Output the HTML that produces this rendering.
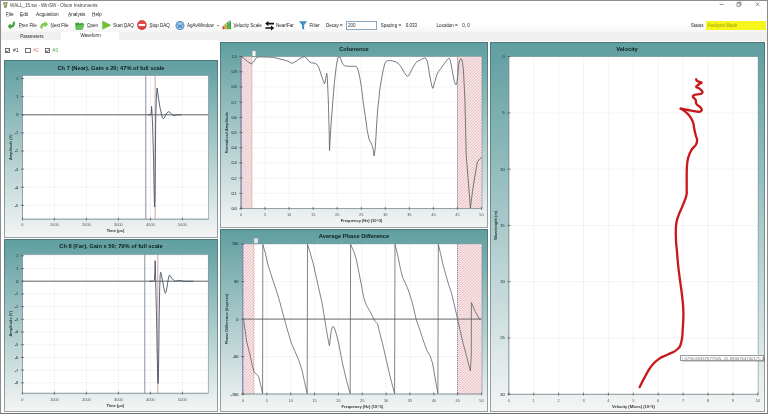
<!DOCTYPE html>
<html><head><meta charset="utf-8"><title>WinSW - Olson Instruments</title>
<style>
html,body{margin:0;padding:0;}
body{width:768px;height:414px;overflow:hidden;background:#fff;position:relative;font-family:"Liberation Sans",sans-serif;color:#222;}
.a{position:absolute;}
.t{position:absolute;white-space:nowrap;line-height:1.16;}
.panel{position:absolute;background:linear-gradient(#5f9ea0,#f5f5f5);box-sizing:border-box;background-origin:border-box;border:0.7px solid rgba(60,80,82,0.5);}
.plot{position:absolute;background:#fff;}
svg{position:absolute;left:0;top:0;overflow:visible;}
svg text{font-family:"Liberation Sans",sans-serif;}
u{text-decoration:none;background:linear-gradient(#777,#777) 0 92%/100% 0.4px no-repeat;}
#root{position:absolute;left:0;top:0;width:768px;height:414px;filter:blur(0.28px);}
</style></head><body><div id="root">
<div class="a" style="left:0px;top:0px;width:768px;height:414px;background:#fff;"></div>
<div class="a" style="left:1px;top:18px;width:766px;height:14.4px;background:linear-gradient(#ffffff 45%,#f5f5f5);"></div>
<div class="a" style="left:1px;top:32.2px;width:766px;height:9.2px;background:#f0f0f0;"></div>
<div class="a" style="left:218px;top:41.2px;width:549px;height:372px;background:#fdfdfd;"></div>
<div class="a" style="left:2px;top:40.3px;width:216px;height:372px;background:#fff;"></div>
<div class="a" style="left:60.7px;top:31.7px;width:58.8px;height:9.6px;background:#fff;"></div>
<svg width="768" height="414" viewBox="0 0 768 414"><g><path d="M3.2 2.6 L7.6 2.2 L6.6 7.4 L4.4 7.8 Z" fill="#6b6b3a"/><path d="M4 3.4 L6.8 3.1 L6.1 6.4 L4.7 6.7Z" fill="#c9c48a"/></g></svg>
<div class="t" style="left:10px;top:2.93px;font-size:4.6px;color:#444;">WALL_15.sw - WinSW - Olson Instruments</div>
<svg width="768" height="414" viewBox="0 0 768 414" fill="none" stroke="#444" stroke-width="0.55"><path d="M719.5 4.5H723.5"/><rect x="737" y="3" width="3" height="3.2"/><path d="M738 3V2.1H741V5.2H740"/><path d="M755.8 2.4L759.4 6M759.4 2.4L755.8 6"/></svg>
<div class="t" style="left:6px;top:11.67px;font-size:4.7px;color:#222;"><u>F</u>ile</div>
<div class="t" style="left:20px;top:11.67px;font-size:4.7px;color:#222;"><u>E</u>dit</div>
<div class="t" style="left:36px;top:11.67px;font-size:4.7px;color:#222;">Ac<u>q</u>uisition</div>
<div class="t" style="left:68px;top:11.67px;font-size:4.7px;color:#222;"><u>A</u>nalysis</div>
<div class="t" style="left:92px;top:11.67px;font-size:4.7px;color:#222;"><u>H</u>elp</div>
<div class="t" style="left:18.75px;top:22.76px;font-size:4.55px;color:#222;"><u>P</u>rev File</div>
<div class="t" style="left:50.6px;top:22.76px;font-size:4.55px;color:#222;"><u>N</u>ext File</div>
<div class="t" style="left:86.9px;top:22.76px;font-size:4.55px;color:#222;"><u>O</u>pen</div>
<div class="t" style="left:113.1px;top:22.76px;font-size:4.55px;color:#222;">Start <u>D</u>AQ</div>
<div class="t" style="left:149.4px;top:22.76px;font-size:4.55px;color:#222;"><u>S</u>top DAQ</div>
<div class="t" style="left:186.9px;top:22.76px;font-size:4.55px;color:#222;">AgAvWindow</div>
<div class="t" style="left:233.4px;top:22.76px;font-size:4.55px;color:#222;"><u>V</u>elocity Scale</div>
<div class="t" style="left:275.9px;top:22.76px;font-size:4.55px;color:#222;">Near/Far</div>
<div class="t" style="left:309.6px;top:22.76px;font-size:4.55px;color:#222;">Filter</div>
<div class="t" style="left:325.9px;top:22.76px;font-size:4.55px;color:#222;">Decay =</div>
<div class="t" style="left:380.75px;top:22.76px;font-size:4.55px;color:#222;">Spacing =</div>
<div class="t" style="left:405.75px;top:22.76px;font-size:4.55px;color:#222;">0.033</div>
<div class="t" style="left:436.6px;top:22.76px;font-size:4.55px;color:#222;">Location =</div>
<div class="t" style="left:462.25px;top:22.76px;font-size:4.55px;color:#222;">0, 0</div>
<div class="t" style="left:690.75px;top:22.96px;font-size:4.55px;color:#222;">Status</div>
<div class="a" style="left:706.4px;top:21.25px;width:59.4px;height:8.5px;background:#f6f61c;"></div>
<div class="t" style="left:707.8px;top:22.96px;font-size:4.55px;color:#9a9a10;">Analysis Mode</div>
<div class="a" style="left:345.5px;top:21px;width:31px;height:8.75px;background:#fff;box-sizing:border-box;border:0.6px solid #8aa6c2;"></div>
<div class="t" style="left:348px;top:22.76px;font-size:4.55px;color:#333;">200</div>
<svg width="768" height="414" viewBox="0 0 768 414">
<!-- prev arrow -->
<path d="M14.6 21.8 C15.4 25.6 13.6 27.6 10.6 27.6 L10.6 29 L7.9 26.4 L10.6 23.8 L10.6 25.4 C12.4 25.4 13.2 24.4 13 22 Z" fill="#3aa33a" stroke="#2c8a2c" stroke-width="0.3"/>
<!-- next arrow -->
<path d="M40.6 28.2 C40.2 24.6 42 23 44.8 23 L44.8 21.5 L48.2 24.3 L44.8 27.1 L44.8 25.5 C43 25.5 42.2 26.4 42.4 28.4 Z" fill="#86cc4e" stroke="#6ab83a" stroke-width="0.3"/>
<!-- open folder -->
<path d="M75.2 23 L78.4 22.4 L79.4 23.4 L83 22.8 L83.6 24.4 L84.4 24.4 L82.4 29.4 L75.8 29.8 Z" fill="#3da23d"/>
<path d="M76.6 25.4 L84.4 24.6 L82.4 29.4 L75.8 29.8 Z" fill="#62c45a"/>
<!-- play -->
<path d="M102.6 21 L110.8 25.2 L102.6 29.2 Z" fill="#6cc232" stroke="#58aa28" stroke-width="0.4" stroke-linejoin="round"/>
<!-- stop -->
<circle cx="141.9" cy="25.1" r="4.8" fill="#cf2d2d"/>
<circle cx="141.9" cy="24.4" r="3.9" fill="#e04a44"/>
<rect x="138.6" y="24" width="6.6" height="2.1" rx="0.5" fill="#fff"/>
<!-- globe -->
<circle cx="180" cy="25.6" r="4.5" fill="#4f8fc9"/>
<circle cx="180" cy="25.6" r="3.4" fill="#a9cdea"/>
<path d="M177.6 23.6 L178.8 27.8 L180 24.8 L181.2 27.8 L182.4 23.6" fill="none" stroke="#3a78b4" stroke-width="0.8"/>
<!-- dropdown -->
<path d="M217 25 L219 25 L218 26.2 Z" fill="#444"/>
<!-- velocity scale -->
<rect x="222.6" y="26.4" width="2" height="2.8" fill="#c23a2a"/>
<rect x="224.8" y="24.6" width="2" height="4.6" fill="#d8a020"/>
<rect x="227" y="22.6" width="2" height="6.6" fill="#4db23a"/>
<rect x="229.2" y="21.4" width="1.8" height="7.8" fill="#3da23d"/>
<path d="M223.4 26 L230.6 20" stroke="#4a7a3a" stroke-width="0.6"/>
<!-- near/far arrows -->
<path d="M274 22.8 H268.4 V21 L265.2 23.6 L268.4 26.2 V24.4 H274 Z" fill="#111"/>
<path d="M265.4 27.2 H271 V25.4 L274.2 28 L271 30.6 V28.8 H265.4 Z" fill="#111"/>
<!-- funnel -->
<path d="M299 21.2 H307.2 L304.1 25 V29.8 L302.1 28.6 V25 Z" fill="#3a8fcb"/>
</svg>
<div class="t" style="left:20.3px;top:34.19px;font-size:4.5px;color:#222;">Parameters</div>
<div class="t" style="left:80.5px;top:33.39px;font-size:4.5px;color:#222;">Waveform</div>
<div class="a" style="left:4.8px;top:48.2px;width:5.3px;height:5.3px;box-sizing:border-box;border:0.5px solid #707070;background:#fff"></div>
<svg width="768" height="414" viewBox="0 0 768 414"><path d="M6.0 50.9 L7.0 52.1 L9.0 49.5" fill="none" stroke="#444" stroke-width="0.7"/></svg>
<div class="t" style="left:13px;top:48.00px;font-size:5px;color:#333;">#1</div>
<div class="a" style="left:25.3px;top:48.2px;width:5.3px;height:5.3px;box-sizing:border-box;border:0.5px solid #707070;background:#fff"></div>
<div class="t" style="left:33.2px;top:48.00px;font-size:5px;color:#e08888;">#2</div>
<div class="a" style="left:44.7px;top:48.2px;width:5.3px;height:5.3px;box-sizing:border-box;border:0.5px solid #707070;background:#fff"></div>
<svg width="768" height="414" viewBox="0 0 768 414"><path d="M45.900000000000006 50.9 L46.900000000000006 52.1 L48.900000000000006 49.5" fill="none" stroke="#444" stroke-width="0.7"/></svg>
<div class="t" style="left:52.4px;top:48.00px;font-size:5px;color:#6aa56a;">#3</div>
<div class="panel" style="left:4px;top:60px;width:213.60px;height:177.50px;"></div>
<svg width="768" height="414" viewBox="0 0 768 414"><rect x="22.5" y="75.4" width="186.00" height="143.70" fill="#fff"/><path d="M54.40 75.4V219.1 M86.40 75.4V219.1 M118.40 75.4V219.1 M150.40 75.4V219.1 M182.40 75.4V219.1 M22.5 78.60H208.5 M22.5 96.70H208.5 M22.5 114.80H208.5 M22.5 132.90H208.5 M22.5 151.00H208.5 M22.5 169.10H208.5 M22.5 187.20H208.5 M22.5 205.30H208.5" stroke="#dadada" stroke-width="0.6" stroke-dasharray="0.8 0.8" fill="none"/><path d="M22.5 114.8H208.5" stroke="#5a5e62" stroke-width="0.95"/><path d="M145.8 75.4V219.1" stroke="#7f8498" stroke-width="0.9"/><path d="M155.1 75.4V219.1" stroke="#c58a94" stroke-width="0.8"/><path d="M148.0 114.8 L150.9 114.8 L151.2 113.0 L151.6 106.4 L151.9 111.0 L152.6 125.0 L153.6 160.0 L154.2 195.0 L154.6 207.0 L155.0 195.0 L155.4 150.0 L155.8 115.0 L156.4 97.0 L157.1 88.0 L157.8 93.0 L158.8 100.0 L160.0 107.5 L161.4 114.0 L162.4 117.8 L163.2 118.8 L164.2 118.0 L165.6 115.2 L167.2 112.6 L168.6 111.7 L170.0 112.4 L171.6 114.0 L173.0 115.3 L174.4 115.6 L176.0 115.1 L178.0 114.7 L181.0 114.8" fill="none" stroke="#465262" stroke-width="0.88" stroke-linejoin="round" stroke-linecap="round" /><rect x="22.5" y="75.4" width="186.00" height="143.70" fill="none" stroke="#5d7f82" stroke-width="0.5"/><path d="M22.5 75.4V219.1H208.5" fill="none" stroke="#868e90" stroke-width="0.55"/><path d="M22.40 217.5V220.5 M54.40 217.5V220.5 M86.40 217.5V220.5 M118.40 217.5V220.5 M150.40 217.5V220.5 M182.40 217.5V220.5 M20.9 78.60H24.1 M20.9 96.70H24.1 M20.9 114.80H24.1 M20.9 132.90H24.1 M20.9 151.00H24.1 M20.9 169.10H24.1 M20.9 187.20H24.1 M20.9 205.30H24.1" stroke="#4a5052" stroke-width="0.7" fill="none"/><text x="22.40" y="226.00" font-size="3.9" fill="#555" text-anchor="middle">0</text><text x="54.40" y="226.00" font-size="3.9" fill="#555" text-anchor="middle">1000</text><text x="86.40" y="226.00" font-size="3.9" fill="#555" text-anchor="middle">2000</text><text x="118.40" y="226.00" font-size="3.9" fill="#555" text-anchor="middle">3000</text><text x="150.40" y="226.00" font-size="3.9" fill="#555" text-anchor="middle">4000</text><text x="182.40" y="226.00" font-size="3.9" fill="#555" text-anchor="middle">5000</text><text x="18.30" y="80.00" font-size="3.9" fill="#2c4a4c" stroke="#2c4a4c" stroke-width="0.08" text-anchor="end">2</text><text x="18.30" y="98.10" font-size="3.9" fill="#2c4a4c" stroke="#2c4a4c" stroke-width="0.08" text-anchor="end">1</text><text x="18.30" y="116.20" font-size="3.9" fill="#2c4a4c" stroke="#2c4a4c" stroke-width="0.08" text-anchor="end">0</text><text x="18.30" y="134.30" font-size="3.9" fill="#2c4a4c" stroke="#2c4a4c" stroke-width="0.08" text-anchor="end">-1</text><text x="18.30" y="152.40" font-size="3.9" fill="#2c4a4c" stroke="#2c4a4c" stroke-width="0.08" text-anchor="end">-2</text><text x="18.30" y="170.50" font-size="3.9" fill="#2c4a4c" stroke="#2c4a4c" stroke-width="0.08" text-anchor="end">-3</text><text x="18.30" y="188.60" font-size="3.9" fill="#2c4a4c" stroke="#2c4a4c" stroke-width="0.08" text-anchor="end">-4</text><text x="18.30" y="206.70" font-size="3.9" fill="#2c4a4c" stroke="#2c4a4c" stroke-width="0.08" text-anchor="end">-5</text><text x="111" y="69.55" font-size="5.72" font-weight="bold" fill="#0c1c1e" text-anchor="middle">Ch 7 (Near), Gain x 20; 47% of full scale</text><text x="115.50" y="232.10" font-size="4" font-weight="bold" fill="#333" text-anchor="middle">Time (μs)</text><text transform="translate(11.60 147.25) rotate(-90)" font-size="3.95" font-weight="bold" fill="#2a3a3c" text-anchor="middle">Amplitude (V)</text></svg>
<div class="panel" style="left:4px;top:239.1px;width:213.60px;height:173.10px;"></div>
<svg width="768" height="414" viewBox="0 0 768 414"><rect x="22.5" y="254.4" width="185.70" height="138.80" fill="#fff"/><path d="M54.40 254.4V393.2 M86.40 254.4V393.2 M118.40 254.4V393.2 M150.40 254.4V393.2 M182.40 254.4V393.2 M22.5 255.80H208.2 M22.5 268.50H208.2 M22.5 281.20H208.2 M22.5 293.90H208.2 M22.5 306.60H208.2 M22.5 319.30H208.2 M22.5 332.00H208.2 M22.5 344.70H208.2 M22.5 357.40H208.2 M22.5 370.10H208.2 M22.5 382.80H208.2" stroke="#dadada" stroke-width="0.6" stroke-dasharray="0.8 0.8" fill="none"/><path d="M22.5 281.2H208.2" stroke="#5a5e62" stroke-width="0.95"/><path d="M144.8 254.4V393.2" stroke="#7f8498" stroke-width="0.9"/><path d="M157.8 254.4V393.2" stroke="#c58a94" stroke-width="0.8"/><path d="M150.0 281.2 L153.6 281.2 L154.4 280.4 L154.8 272.0 L155.1 260.7 L155.4 268.0 L155.9 290.0 L156.6 320.0 L157.2 355.0 L157.8 380.0 L158.1 383.5 L158.4 378.0 L158.8 350.0 L159.2 315.0 L159.7 288.0 L160.2 274.5 L160.7 272.3 L161.4 274.5 L162.4 280.0 L163.6 287.0 L164.6 291.6 L165.4 293.2 L166.2 291.5 L167.2 286.0 L168.2 279.5 L169.3 275.2 L170.4 276.0 L172.0 278.4 L174.0 280.5 L175.8 281.3 L178.5 280.3 L181.0 280.8 L185.0 281.3 L193.0 281.2" fill="none" stroke="#465262" stroke-width="0.88" stroke-linejoin="round" stroke-linecap="round" /><rect x="22.5" y="254.4" width="185.70" height="138.80" fill="none" stroke="#5d7f82" stroke-width="0.5"/><path d="M22.5 254.4V393.2H208.2" fill="none" stroke="#868e90" stroke-width="0.55"/><path d="M22.40 391.59999999999997V394.59999999999997 M54.40 391.59999999999997V394.59999999999997 M86.40 391.59999999999997V394.59999999999997 M118.40 391.59999999999997V394.59999999999997 M150.40 391.59999999999997V394.59999999999997 M182.40 391.59999999999997V394.59999999999997 M20.9 255.80H24.1 M20.9 268.50H24.1 M20.9 281.20H24.1 M20.9 293.90H24.1 M20.9 306.60H24.1 M20.9 319.30H24.1 M20.9 332.00H24.1 M20.9 344.70H24.1 M20.9 357.40H24.1 M20.9 370.10H24.1 M20.9 382.80H24.1" stroke="#4a5052" stroke-width="0.7" fill="none"/><text x="22.40" y="400.60" font-size="3.9" fill="#555" text-anchor="middle">0</text><text x="54.40" y="400.60" font-size="3.9" fill="#555" text-anchor="middle">1000</text><text x="86.40" y="400.60" font-size="3.9" fill="#555" text-anchor="middle">2000</text><text x="118.40" y="400.60" font-size="3.9" fill="#555" text-anchor="middle">3000</text><text x="150.40" y="400.60" font-size="3.9" fill="#555" text-anchor="middle">4000</text><text x="182.40" y="400.60" font-size="3.9" fill="#555" text-anchor="middle">5000</text><text x="18.30" y="257.20" font-size="3.9" fill="#2c4a4c" stroke="#2c4a4c" stroke-width="0.08" text-anchor="end">2</text><text x="18.30" y="269.90" font-size="3.9" fill="#2c4a4c" stroke="#2c4a4c" stroke-width="0.08" text-anchor="end">1</text><text x="18.30" y="282.60" font-size="3.9" fill="#2c4a4c" stroke="#2c4a4c" stroke-width="0.08" text-anchor="end">0</text><text x="18.30" y="295.30" font-size="3.9" fill="#2c4a4c" stroke="#2c4a4c" stroke-width="0.08" text-anchor="end">-1</text><text x="18.30" y="308.00" font-size="3.9" fill="#2c4a4c" stroke="#2c4a4c" stroke-width="0.08" text-anchor="end">-2</text><text x="18.30" y="320.70" font-size="3.9" fill="#2c4a4c" stroke="#2c4a4c" stroke-width="0.08" text-anchor="end">-3</text><text x="18.30" y="333.40" font-size="3.9" fill="#2c4a4c" stroke="#2c4a4c" stroke-width="0.08" text-anchor="end">-4</text><text x="18.30" y="346.10" font-size="3.9" fill="#2c4a4c" stroke="#2c4a4c" stroke-width="0.08" text-anchor="end">-5</text><text x="18.30" y="358.80" font-size="3.9" fill="#2c4a4c" stroke="#2c4a4c" stroke-width="0.08" text-anchor="end">-6</text><text x="18.30" y="371.50" font-size="3.9" fill="#2c4a4c" stroke="#2c4a4c" stroke-width="0.08" text-anchor="end">-7</text><text x="18.30" y="384.20" font-size="3.9" fill="#2c4a4c" stroke="#2c4a4c" stroke-width="0.08" text-anchor="end">-8</text><text x="111" y="248.35" font-size="5.72" font-weight="bold" fill="#0c1c1e" text-anchor="middle">Ch 8 (Far), Gain x 50; 79% of full scale</text><text x="115.35" y="406.70" font-size="4" font-weight="bold" fill="#333" text-anchor="middle">Time (μs)</text><text transform="translate(11.60 323.80) rotate(-90)" font-size="3.95" font-weight="bold" fill="#2a3a3c" text-anchor="middle">Amplitude (V)</text></svg>
<div class="panel" style="left:220.2px;top:42.3px;width:267.60px;height:185.30px;"></div>
<svg width="768" height="414" viewBox="0 0 768 414"><rect x="241" y="56.5" width="241.00" height="152.00" fill="#fff"/><path d="M265.05 56.5V208.5 M289.10 56.5V208.5 M313.15 56.5V208.5 M337.20 56.5V208.5 M361.25 56.5V208.5 M385.30 56.5V208.5 M409.35 56.5V208.5 M433.40 56.5V208.5 M457.45 56.5V208.5 M241 71.70H482 M241 86.90H482 M241 102.10H482 M241 117.30H482 M241 132.50H482 M241 147.70H482 M241 162.90H482 M241 178.10H482 M241 193.30H482" stroke="#dadada" stroke-width="0.6" stroke-dasharray="0.8 0.8" fill="none"/><clipPath id="hc1"><rect x="241" y="56.5" width="10.90" height="152.00"/></clipPath><rect x="241" y="56.5" width="10.90" height="152.00" fill="#f9e7e7"/><path clip-path="url(#hc1)" d="M89.00 208.50l152.00 -152.00 M92.00 208.50l152.00 -152.00 M95.00 208.50l152.00 -152.00 M98.00 208.50l152.00 -152.00 M101.00 208.50l152.00 -152.00 M104.00 208.50l152.00 -152.00 M107.00 208.50l152.00 -152.00 M110.00 208.50l152.00 -152.00 M113.00 208.50l152.00 -152.00 M116.00 208.50l152.00 -152.00 M119.00 208.50l152.00 -152.00 M122.00 208.50l152.00 -152.00 M125.00 208.50l152.00 -152.00 M128.00 208.50l152.00 -152.00 M131.00 208.50l152.00 -152.00 M134.00 208.50l152.00 -152.00 M137.00 208.50l152.00 -152.00 M140.00 208.50l152.00 -152.00 M143.00 208.50l152.00 -152.00 M146.00 208.50l152.00 -152.00 M149.00 208.50l152.00 -152.00 M152.00 208.50l152.00 -152.00 M155.00 208.50l152.00 -152.00 M158.00 208.50l152.00 -152.00 M161.00 208.50l152.00 -152.00 M164.00 208.50l152.00 -152.00 M167.00 208.50l152.00 -152.00 M170.00 208.50l152.00 -152.00 M173.00 208.50l152.00 -152.00 M176.00 208.50l152.00 -152.00 M179.00 208.50l152.00 -152.00 M182.00 208.50l152.00 -152.00 M185.00 208.50l152.00 -152.00 M188.00 208.50l152.00 -152.00 M191.00 208.50l152.00 -152.00 M194.00 208.50l152.00 -152.00 M197.00 208.50l152.00 -152.00 M200.00 208.50l152.00 -152.00 M203.00 208.50l152.00 -152.00 M206.00 208.50l152.00 -152.00 M209.00 208.50l152.00 -152.00 M212.00 208.50l152.00 -152.00 M215.00 208.50l152.00 -152.00 M218.00 208.50l152.00 -152.00 M221.00 208.50l152.00 -152.00 M224.00 208.50l152.00 -152.00 M227.00 208.50l152.00 -152.00 M230.00 208.50l152.00 -152.00 M233.00 208.50l152.00 -152.00 M236.00 208.50l152.00 -152.00 M239.00 208.50l152.00 -152.00 M242.00 208.50l152.00 -152.00 M245.00 208.50l152.00 -152.00 M248.00 208.50l152.00 -152.00 M251.00 208.50l152.00 -152.00" stroke="#e3b8bc" stroke-width="0.92" fill="none"/><clipPath id="hc2"><rect x="457.4" y="56.5" width="24.60" height="152.00"/></clipPath><rect x="457.4" y="56.5" width="24.60" height="152.00" fill="#f9e7e7"/><path clip-path="url(#hc2)" d="M305.40 208.50l152.00 -152.00 M308.40 208.50l152.00 -152.00 M311.40 208.50l152.00 -152.00 M314.40 208.50l152.00 -152.00 M317.40 208.50l152.00 -152.00 M320.40 208.50l152.00 -152.00 M323.40 208.50l152.00 -152.00 M326.40 208.50l152.00 -152.00 M329.40 208.50l152.00 -152.00 M332.40 208.50l152.00 -152.00 M335.40 208.50l152.00 -152.00 M338.40 208.50l152.00 -152.00 M341.40 208.50l152.00 -152.00 M344.40 208.50l152.00 -152.00 M347.40 208.50l152.00 -152.00 M350.40 208.50l152.00 -152.00 M353.40 208.50l152.00 -152.00 M356.40 208.50l152.00 -152.00 M359.40 208.50l152.00 -152.00 M362.40 208.50l152.00 -152.00 M365.40 208.50l152.00 -152.00 M368.40 208.50l152.00 -152.00 M371.40 208.50l152.00 -152.00 M374.40 208.50l152.00 -152.00 M377.40 208.50l152.00 -152.00 M380.40 208.50l152.00 -152.00 M383.40 208.50l152.00 -152.00 M386.40 208.50l152.00 -152.00 M389.40 208.50l152.00 -152.00 M392.40 208.50l152.00 -152.00 M395.40 208.50l152.00 -152.00 M398.40 208.50l152.00 -152.00 M401.40 208.50l152.00 -152.00 M404.40 208.50l152.00 -152.00 M407.40 208.50l152.00 -152.00 M410.40 208.50l152.00 -152.00 M413.40 208.50l152.00 -152.00 M416.40 208.50l152.00 -152.00 M419.40 208.50l152.00 -152.00 M422.40 208.50l152.00 -152.00 M425.40 208.50l152.00 -152.00 M428.40 208.50l152.00 -152.00 M431.40 208.50l152.00 -152.00 M434.40 208.50l152.00 -152.00 M437.40 208.50l152.00 -152.00 M440.40 208.50l152.00 -152.00 M443.40 208.50l152.00 -152.00 M446.40 208.50l152.00 -152.00 M449.40 208.50l152.00 -152.00 M452.40 208.50l152.00 -152.00 M455.40 208.50l152.00 -152.00 M458.40 208.50l152.00 -152.00 M461.40 208.50l152.00 -152.00 M464.40 208.50l152.00 -152.00 M467.40 208.50l152.00 -152.00 M470.40 208.50l152.00 -152.00 M473.40 208.50l152.00 -152.00 M476.40 208.50l152.00 -152.00 M479.40 208.50l152.00 -152.00" stroke="#e3b8bc" stroke-width="0.92" fill="none"/><path d="M251.9 56.5V208.5" stroke="#d99" stroke-width="0.6"/><path d="M457.5 56.5V208.5" stroke="#77709a" stroke-width="0.8" stroke-dasharray="1.2 0.8"/><path d="M241.7 56.9 L244.0 58.4 L247.3 61.3 L250.0 63.2 L251.7 63.8 L253.2 62.4 L254.8 60.0 L256.7 57.2 L260.0 56.9 L266.0 57.0 L272.4 57.3 L276.0 58.0 L280.0 59.0 L284.0 60.0 L287.5 61.0 L290.0 62.4 L291.9 63.2 L293.4 62.8 L295.0 62.0 L297.5 60.2 L300.0 58.5 L302.5 57.2 L304.5 56.7 L306.0 57.6 L308.9 61.3 L311.4 62.9 L313.5 63.0 L315.1 63.2 L316.8 64.4 L318.5 66.8 L320.0 71.0 L321.6 76.0 L323.2 80.6 L324.5 83.9 L325.4 81.0 L326.2 75.5 L326.7 73.2 L327.2 76.0 L327.7 86.0 L328.3 100.0 L329.0 125.0 L329.5 150.5 L330.1 140.0 L331.0 125.0 L332.0 112.0 L333.0 99.0 L334.5 81.4 L336.4 65.1 L337.9 57.8 L339.0 57.0 L340.2 57.3 L341.0 59.5 L342.0 62.6 L343.2 64.6 L344.5 65.7 L347.0 66.2 L350.2 66.3 L353.0 66.2 L355.9 66.4 L357.0 67.4 L357.9 69.4 L359.6 76.4 L361.5 87.7 L363.2 102.0 L365.3 116.3 L367.2 130.2 L369.0 139.0 L370.4 142.0 L371.6 144.0 L372.6 147.0 L373.4 150.3 L374.1 156.0 L374.7 152.0 L375.3 147.7 L376.0 136.0 L376.6 125.1 L377.8 107.5 L378.8 100.0 L379.7 90.2 L382.2 75.1 L383.6 68.4 L384.7 63.8 L386.0 61.6 L387.3 60.7 L390.0 60.6 L392.9 61.0 L395.5 61.8 L397.9 63.2 L400.2 65.6 L402.4 69.0 L404.4 72.6 L406.0 75.2 L407.8 76.4 L409.0 75.0 L410.3 72.6 L412.8 67.6 L416.0 62.6 L418.0 61.0 L420.4 60.0 L422.8 58.6 L424.8 57.8 L426.0 58.6 L427.3 61.3 L428.2 66.0 L429.2 72.6 L431.1 82.7 L432.0 86.4 L432.7 88.3 L433.4 87.0 L434.2 83.9 L436.7 75.1 L438.6 71.4 L440.5 68.8 L444.2 63.8 L447.4 59.4 L448.9 58.2 L449.8 59.0 L450.5 61.3 L451.4 66.0 L452.4 71.4 L454.3 81.4 L455.6 84.5 L456.4 84.4 L456.9 83.0 L457.8 75.1 L458.7 65.1 L459.4 61.0 L460.0 59.4 L461.2 58.8 L461.9 60.0 L462.5 62.6 L463.2 68.0 L463.7 75.1 L465.0 102.0 L466.2 155.0 L468.1 178.8 L469.4 195.0 L470.4 208.0 L471.4 200.0 L472.5 191.4 L475.0 175.1 L477.5 161.5 L479.8 159.0 L481.6 157.4" fill="none" stroke="#565a5e" stroke-width="0.8" stroke-linejoin="round" stroke-linecap="round" /><rect x="252.1" y="50.8" width="3.8" height="5.8" fill="#f4f8f8" stroke="#7a8a8c" stroke-width="0.5"/><rect x="241" y="56.5" width="241.00" height="152.00" fill="none" stroke="#5d7f82" stroke-width="0.5"/><path d="M241 56.5V208.5H482" fill="none" stroke="#868e90" stroke-width="0.55"/><path d="M241.2 56.5V208.5" stroke="#7476cf" stroke-width="0.95" stroke-dasharray="1.3 0.9"/><path d="M241.00 206.9V209.9 M265.05 206.9V209.9 M289.10 206.9V209.9 M313.15 206.9V209.9 M337.20 206.9V209.9 M361.25 206.9V209.9 M385.30 206.9V209.9 M409.35 206.9V209.9 M433.40 206.9V209.9 M457.45 206.9V209.9 M481.50 206.9V209.9 M239.4 56.50H242.6 M239.4 71.70H242.6 M239.4 86.90H242.6 M239.4 102.10H242.6 M239.4 117.30H242.6 M239.4 132.50H242.6 M239.4 147.70H242.6 M239.4 162.90H242.6 M239.4 178.10H242.6 M239.4 193.30H242.6 M239.4 208.50H242.6" stroke="#4a5052" stroke-width="0.7" fill="none"/><text x="241.00" y="215.80" font-size="3.9" fill="#555" text-anchor="middle">0</text><text x="265.05" y="215.80" font-size="3.9" fill="#555" text-anchor="middle">5</text><text x="289.10" y="215.80" font-size="3.9" fill="#555" text-anchor="middle">10</text><text x="313.15" y="215.80" font-size="3.9" fill="#555" text-anchor="middle">15</text><text x="337.20" y="215.80" font-size="3.9" fill="#555" text-anchor="middle">20</text><text x="361.25" y="215.80" font-size="3.9" fill="#555" text-anchor="middle">25</text><text x="385.30" y="215.80" font-size="3.9" fill="#555" text-anchor="middle">30</text><text x="409.35" y="215.80" font-size="3.9" fill="#555" text-anchor="middle">35</text><text x="433.40" y="215.80" font-size="3.9" fill="#555" text-anchor="middle">40</text><text x="457.45" y="215.80" font-size="3.9" fill="#555" text-anchor="middle">45</text><text x="481.50" y="215.80" font-size="3.9" fill="#555" text-anchor="middle">50</text><text x="236.80" y="57.90" font-size="3.9" fill="#2c4a4c" stroke="#2c4a4c" stroke-width="0.08" text-anchor="end">1.0</text><text x="236.80" y="73.10" font-size="3.9" fill="#2c4a4c" stroke="#2c4a4c" stroke-width="0.08" text-anchor="end">0.9</text><text x="236.80" y="88.30" font-size="3.9" fill="#2c4a4c" stroke="#2c4a4c" stroke-width="0.08" text-anchor="end">0.8</text><text x="236.80" y="103.50" font-size="3.9" fill="#2c4a4c" stroke="#2c4a4c" stroke-width="0.08" text-anchor="end">0.7</text><text x="236.80" y="118.70" font-size="3.9" fill="#2c4a4c" stroke="#2c4a4c" stroke-width="0.08" text-anchor="end">0.6</text><text x="236.80" y="133.90" font-size="3.9" fill="#2c4a4c" stroke="#2c4a4c" stroke-width="0.08" text-anchor="end">0.5</text><text x="236.80" y="149.10" font-size="3.9" fill="#2c4a4c" stroke="#2c4a4c" stroke-width="0.08" text-anchor="end">0.4</text><text x="236.80" y="164.30" font-size="3.9" fill="#2c4a4c" stroke="#2c4a4c" stroke-width="0.08" text-anchor="end">0.3</text><text x="236.80" y="179.50" font-size="3.9" fill="#2c4a4c" stroke="#2c4a4c" stroke-width="0.08" text-anchor="end">0.2</text><text x="236.80" y="194.70" font-size="3.9" fill="#2c4a4c" stroke="#2c4a4c" stroke-width="0.08" text-anchor="end">0.1</text><text x="236.80" y="209.90" font-size="3.9" fill="#2c4a4c" stroke="#2c4a4c" stroke-width="0.08" text-anchor="end">0.0</text><text x="354" y="51.35" font-size="5.72" font-weight="bold" fill="#0c1c1e" text-anchor="middle">Coherence</text><text x="361.50" y="222.00" font-size="4" font-weight="bold" fill="#333" text-anchor="middle">Frequency (Hz) (10^3)</text><text transform="translate(227.70 132.50) rotate(-90)" font-size="3.95" font-weight="bold" fill="#2a3a3c" text-anchor="middle">Normalized Amplitude</text></svg>
<div class="panel" style="left:220.2px;top:229.4px;width:267.60px;height:182.90px;"></div>
<svg width="768" height="414" viewBox="0 0 768 414"><rect x="242.6" y="243.9" width="239.40" height="150.10" fill="#fff"/><path d="M266.85 243.9V394 M290.70 243.9V394 M314.55 243.9V394 M338.40 243.9V394 M362.25 243.9V394 M386.10 243.9V394 M409.95 243.9V394 M433.80 243.9V394 M457.65 243.9V394 M242.6 281.55H482 M242.6 319.10H482 M242.6 356.65H482" stroke="#dadada" stroke-width="0.6" stroke-dasharray="0.8 0.8" fill="none"/><clipPath id="hc3"><rect x="243" y="243.9" width="10.90" height="150.10"/></clipPath><rect x="243" y="243.9" width="10.90" height="150.10" fill="#f9e7e7"/><path clip-path="url(#hc3)" d="M92.90 394.00l150.10 -150.10 M95.90 394.00l150.10 -150.10 M98.90 394.00l150.10 -150.10 M101.90 394.00l150.10 -150.10 M104.90 394.00l150.10 -150.10 M107.90 394.00l150.10 -150.10 M110.90 394.00l150.10 -150.10 M113.90 394.00l150.10 -150.10 M116.90 394.00l150.10 -150.10 M119.90 394.00l150.10 -150.10 M122.90 394.00l150.10 -150.10 M125.90 394.00l150.10 -150.10 M128.90 394.00l150.10 -150.10 M131.90 394.00l150.10 -150.10 M134.90 394.00l150.10 -150.10 M137.90 394.00l150.10 -150.10 M140.90 394.00l150.10 -150.10 M143.90 394.00l150.10 -150.10 M146.90 394.00l150.10 -150.10 M149.90 394.00l150.10 -150.10 M152.90 394.00l150.10 -150.10 M155.90 394.00l150.10 -150.10 M158.90 394.00l150.10 -150.10 M161.90 394.00l150.10 -150.10 M164.90 394.00l150.10 -150.10 M167.90 394.00l150.10 -150.10 M170.90 394.00l150.10 -150.10 M173.90 394.00l150.10 -150.10 M176.90 394.00l150.10 -150.10 M179.90 394.00l150.10 -150.10 M182.90 394.00l150.10 -150.10 M185.90 394.00l150.10 -150.10 M188.90 394.00l150.10 -150.10 M191.90 394.00l150.10 -150.10 M194.90 394.00l150.10 -150.10 M197.90 394.00l150.10 -150.10 M200.90 394.00l150.10 -150.10 M203.90 394.00l150.10 -150.10 M206.90 394.00l150.10 -150.10 M209.90 394.00l150.10 -150.10 M212.90 394.00l150.10 -150.10 M215.90 394.00l150.10 -150.10 M218.90 394.00l150.10 -150.10 M221.90 394.00l150.10 -150.10 M224.90 394.00l150.10 -150.10 M227.90 394.00l150.10 -150.10 M230.90 394.00l150.10 -150.10 M233.90 394.00l150.10 -150.10 M236.90 394.00l150.10 -150.10 M239.90 394.00l150.10 -150.10 M242.90 394.00l150.10 -150.10 M245.90 394.00l150.10 -150.10 M248.90 394.00l150.10 -150.10 M251.90 394.00l150.10 -150.10" stroke="#e3b8bc" stroke-width="0.92" fill="none"/><clipPath id="hc4"><rect x="457.4" y="243.9" width="24.60" height="150.10"/></clipPath><rect x="457.4" y="243.9" width="24.60" height="150.10" fill="#f9e7e7"/><path clip-path="url(#hc4)" d="M307.30 394.00l150.10 -150.10 M310.30 394.00l150.10 -150.10 M313.30 394.00l150.10 -150.10 M316.30 394.00l150.10 -150.10 M319.30 394.00l150.10 -150.10 M322.30 394.00l150.10 -150.10 M325.30 394.00l150.10 -150.10 M328.30 394.00l150.10 -150.10 M331.30 394.00l150.10 -150.10 M334.30 394.00l150.10 -150.10 M337.30 394.00l150.10 -150.10 M340.30 394.00l150.10 -150.10 M343.30 394.00l150.10 -150.10 M346.30 394.00l150.10 -150.10 M349.30 394.00l150.10 -150.10 M352.30 394.00l150.10 -150.10 M355.30 394.00l150.10 -150.10 M358.30 394.00l150.10 -150.10 M361.30 394.00l150.10 -150.10 M364.30 394.00l150.10 -150.10 M367.30 394.00l150.10 -150.10 M370.30 394.00l150.10 -150.10 M373.30 394.00l150.10 -150.10 M376.30 394.00l150.10 -150.10 M379.30 394.00l150.10 -150.10 M382.30 394.00l150.10 -150.10 M385.30 394.00l150.10 -150.10 M388.30 394.00l150.10 -150.10 M391.30 394.00l150.10 -150.10 M394.30 394.00l150.10 -150.10 M397.30 394.00l150.10 -150.10 M400.30 394.00l150.10 -150.10 M403.30 394.00l150.10 -150.10 M406.30 394.00l150.10 -150.10 M409.30 394.00l150.10 -150.10 M412.30 394.00l150.10 -150.10 M415.30 394.00l150.10 -150.10 M418.30 394.00l150.10 -150.10 M421.30 394.00l150.10 -150.10 M424.30 394.00l150.10 -150.10 M427.30 394.00l150.10 -150.10 M430.30 394.00l150.10 -150.10 M433.30 394.00l150.10 -150.10 M436.30 394.00l150.10 -150.10 M439.30 394.00l150.10 -150.10 M442.30 394.00l150.10 -150.10 M445.30 394.00l150.10 -150.10 M448.30 394.00l150.10 -150.10 M451.30 394.00l150.10 -150.10 M454.30 394.00l150.10 -150.10 M457.30 394.00l150.10 -150.10 M460.30 394.00l150.10 -150.10 M463.30 394.00l150.10 -150.10 M466.30 394.00l150.10 -150.10 M469.30 394.00l150.10 -150.10 M472.30 394.00l150.10 -150.10 M475.30 394.00l150.10 -150.10 M478.30 394.00l150.10 -150.10 M481.30 394.00l150.10 -150.10" stroke="#e3b8bc" stroke-width="0.92" fill="none"/><path d="M242.6 319.1H481" stroke="#5c5c60" stroke-width="0.9"/><path d="M253.9 243.9V394" stroke="#d99" stroke-width="0.6"/><path d="M457.5 243.9V394" stroke="#77709a" stroke-width="0.8" stroke-dasharray="1.2 0.8"/><path d="M243.5 319.1 L244.8 327.7 L246.7 342.0 L247.3 344.0 L249.8 354.0 L252.3 365.4 L254.2 372.3 L256.7 374.2 L258.6 376.7 L260.5 384.2 L262.6 393.6 L262.8 244.3 L265.5 253.8 L268.0 265.1 L270.5 272.7 L273.7 282.7 L276.5 291.0 L280.0 302.6 L284.4 319.1 L287.5 330.2 L291.3 343.0 L295.0 351.5 L298.8 360.3 L302.0 370.4 L304.5 381.7 L307.2 393.6 L307.5 244.3 L310.1 252.6 L313.3 263.9 L316.4 277.7 L319.1 290.0 L322.2 303.4 L324.7 319.1 L326.7 331.5 L328.6 342.0 L329.5 345.8 L330.0 341.0 L331.1 331.5 L332.0 328.0 L333.0 326.4 L334.0 327.2 L334.8 329.0 L336.7 335.2 L338.6 343.0 L342.4 362.8 L346.2 379.2 L350.2 393.6 L350.6 244.3 L353.7 251.3 L356.2 258.8 L358.7 271.4 L361.2 284.0 L363.7 297.5 L366.3 305.1 L370.0 311.4 L373.2 317.6 L375.0 321.4 L377.6 323.9 L379.4 331.5 L381.3 339.0 L382.5 343.5 L386.4 360.3 L390.1 376.7 L394.6 393.6 L395.0 244.3 L397.7 255.1 L400.2 267.6 L402.7 277.7 L405.8 284.0 L408.3 290.0 L412.3 302.6 L416.1 319.1 L419.9 330.2 L424.0 342.5 L426.8 350.3 L429.9 355.3 L432.4 362.8 L434.3 372.9 L436.2 384.2 L437.9 393.6 L438.3 244.3 L440.6 253.8 L443.1 265.1 L446.3 276.4 L448.8 285.2 L450.9 291.0 L453.8 302.6 L457.6 319.1 L460.1 330.2 L463.0 343.0 L466.4 355.3 L468.9 365.4 L470.4 371.0 L471.3 355.0 L471.4 302.6 L475.1 311.4 L479.5 319.1 L481.0 319.1" fill="none" stroke="#565a5e" stroke-width="0.75" stroke-linejoin="round" stroke-linecap="round" /><rect x="253.9" y="238" width="4.2" height="5.9" fill="#dfeaea" stroke="#7a8a8c" stroke-width="0.5"/><rect x="242.6" y="243.9" width="239.40" height="150.10" fill="none" stroke="#5d7f82" stroke-width="0.5"/><path d="M242.6 243.9V394H482" fill="none" stroke="#868e90" stroke-width="0.55"/><path d="M243 243.9V394" stroke="#7476cf" stroke-width="1.05" stroke-dasharray="1.3 0.9"/><path d="M243.00 392.4V395.4 M266.85 392.4V395.4 M290.70 392.4V395.4 M314.55 392.4V395.4 M338.40 392.4V395.4 M362.25 392.4V395.4 M386.10 392.4V395.4 M409.95 392.4V395.4 M433.80 392.4V395.4 M457.65 392.4V395.4 M481.50 392.4V395.4 M241.0 244.00H244.2 M241.0 281.55H244.2 M241.0 319.10H244.2 M241.0 356.65H244.2 M241.0 394.20H244.2" stroke="#4a5052" stroke-width="0.7" fill="none"/><text x="243.00" y="401.60" font-size="3.9" fill="#555" text-anchor="middle">0</text><text x="266.85" y="401.60" font-size="3.9" fill="#555" text-anchor="middle">5</text><text x="290.70" y="401.60" font-size="3.9" fill="#555" text-anchor="middle">10</text><text x="314.55" y="401.60" font-size="3.9" fill="#555" text-anchor="middle">15</text><text x="338.40" y="401.60" font-size="3.9" fill="#555" text-anchor="middle">20</text><text x="362.25" y="401.60" font-size="3.9" fill="#555" text-anchor="middle">25</text><text x="386.10" y="401.60" font-size="3.9" fill="#555" text-anchor="middle">30</text><text x="409.95" y="401.60" font-size="3.9" fill="#555" text-anchor="middle">35</text><text x="433.80" y="401.60" font-size="3.9" fill="#555" text-anchor="middle">40</text><text x="457.65" y="401.60" font-size="3.9" fill="#555" text-anchor="middle">45</text><text x="481.50" y="401.60" font-size="3.9" fill="#555" text-anchor="middle">50</text><text x="238.40" y="245.40" font-size="3.9" fill="#2c4a4c" stroke="#2c4a4c" stroke-width="0.08" text-anchor="end">180</text><text x="238.40" y="282.95" font-size="3.9" fill="#2c4a4c" stroke="#2c4a4c" stroke-width="0.08" text-anchor="end">90</text><text x="238.40" y="320.50" font-size="3.9" fill="#2c4a4c" stroke="#2c4a4c" stroke-width="0.08" text-anchor="end">0</text><text x="238.40" y="358.05" font-size="3.9" fill="#2c4a4c" stroke="#2c4a4c" stroke-width="0.08" text-anchor="end">-90</text><text x="238.40" y="395.60" font-size="3.9" fill="#2c4a4c" stroke="#2c4a4c" stroke-width="0.08" text-anchor="end">-180</text><text x="354" y="238.45" font-size="5.72" font-weight="bold" fill="#0c1c1e" text-anchor="middle">Average Phase Difference</text><text x="362.30" y="408.00" font-size="4" font-weight="bold" fill="#333" text-anchor="middle">Frequency (Hz) (10^3)</text><text transform="translate(227.70 318.95) rotate(-90)" font-size="3.95" font-weight="bold" fill="#2a3a3c" text-anchor="middle">Phase Difference (degrees)</text></svg>
<div class="panel" style="left:489.6px;top:42.2px;width:275.00px;height:370.10px;"></div>
<svg width="768" height="414" viewBox="0 0 768 414"><rect x="508.9" y="56.6" width="249.20" height="337.60" fill="#fff"/><path d="M533.70 56.6V394.2 M558.60 56.6V394.2 M583.50 56.6V394.2 M608.40 56.6V394.2 M633.30 56.6V394.2 M658.20 56.6V394.2 M683.10 56.6V394.2 M708.00 56.6V394.2 M732.90 56.6V394.2 M508.9 112.88H758.1 M508.9 169.15H758.1 M508.9 225.43H758.1 M508.9 281.70H758.1 M508.9 337.98H758.1" stroke="#dadada" stroke-width="0.6" stroke-dasharray="0.8 0.8" fill="none"/><path d="M696.2 79.2C696.5 79.7 695.9 80.2 697.2 81.1C698.5 81.9 701.1 81.8 701.5 82.6C701.9 83.4 699.9 83.4 698.6 84.5C697.3 85.6 696.0 85.8 696.2 86.9C696.5 88.0 698.2 87.2 699.6 88.8C701.0 90.4 703.6 91.5 702.0 93.2C700.4 94.9 694.9 93.9 693.3 95.6C691.7 97.3 694.9 97.9 695.7 100.0C696.5 102.1 695.2 102.1 696.4 103.9C697.6 105.8 699.1 106.0 700.4 107.4C701.7 108.8 701.7 108.4 701.7 109.4C701.8 110.4 701.8 110.9 700.6 111.4C699.4 112.0 700.1 111.9 697.0 111.6C693.9 111.2 692.1 110.8 688.0 110.0C683.9 109.2 681.8 108.4 680.7 108.5C679.6 108.6 681.9 109.1 683.6 110.4C685.3 111.7 685.6 111.8 687.4 113.6C689.2 115.4 689.4 115.4 690.9 117.8C692.4 120.2 692.4 120.4 693.3 123.2C694.1 126.0 693.6 125.8 694.3 129.0C694.9 132.2 695.2 133.3 695.9 136.0C696.6 138.7 697.1 137.6 697.1 139.8C697.1 142.0 697.3 142.3 695.9 144.8C694.5 147.3 693.4 146.7 691.5 149.8C689.6 153.0 689.4 153.6 688.3 157.4C687.2 161.2 687.5 160.8 687.1 164.9C686.7 169.0 686.8 167.9 686.7 173.7C686.6 179.5 686.8 182.5 686.7 188.0C686.6 193.5 687.3 191.4 686.3 195.7C685.3 200.0 684.9 200.0 682.8 205.3C680.7 210.6 679.7 211.6 678.0 216.9C676.3 222.2 676.5 220.8 676.0 226.6C675.5 232.4 675.8 233.8 676.0 240.1C676.2 246.4 676.5 245.7 677.0 251.7C677.5 257.7 677.3 257.1 678.0 264.0C678.7 270.9 678.8 271.3 679.9 279.5C681.0 287.7 681.3 288.6 682.2 296.8C683.1 305.0 683.2 304.6 683.4 312.3C683.5 320.1 683.3 320.5 682.8 327.8C682.3 335.1 682.8 336.3 681.4 341.7C680.0 347.1 680.3 346.4 677.0 349.5C673.7 352.6 672.9 351.9 668.3 354.3C663.7 356.7 663.0 356.0 658.6 359.1C654.2 362.2 654.5 362.0 650.9 366.8C647.3 371.6 646.9 373.3 644.1 378.4C641.3 383.5 640.8 384.9 639.7 387.1" fill="none" stroke="#c8181c" stroke-width="2.3" stroke-linejoin="round" stroke-linecap="round"/><rect x="508.9" y="56.6" width="249.20" height="337.60" fill="none" stroke="#5d7f82" stroke-width="0.5"/><path d="M508.9 56.6V394.2H758.1" fill="none" stroke="#868e90" stroke-width="0.55"/><path d="M508.80 392.59999999999997V395.59999999999997 M533.70 392.59999999999997V395.59999999999997 M558.60 392.59999999999997V395.59999999999997 M583.50 392.59999999999997V395.59999999999997 M608.40 392.59999999999997V395.59999999999997 M633.30 392.59999999999997V395.59999999999997 M658.20 392.59999999999997V395.59999999999997 M683.10 392.59999999999997V395.59999999999997 M708.00 392.59999999999997V395.59999999999997 M732.90 392.59999999999997V395.59999999999997 M757.80 392.59999999999997V395.59999999999997 M507.29999999999995 56.60H510.5 M507.29999999999995 112.88H510.5 M507.29999999999995 169.15H510.5 M507.29999999999995 225.43H510.5 M507.29999999999995 281.70H510.5 M507.29999999999995 337.98H510.5 M507.29999999999995 394.25H510.5" stroke="#4a5052" stroke-width="0.7" fill="none"/><text x="508.80" y="401.80" font-size="3.9" fill="#555" text-anchor="middle">0</text><text x="533.70" y="401.80" font-size="3.9" fill="#555" text-anchor="middle">1</text><text x="558.60" y="401.80" font-size="3.9" fill="#555" text-anchor="middle">2</text><text x="583.50" y="401.80" font-size="3.9" fill="#555" text-anchor="middle">3</text><text x="608.40" y="401.80" font-size="3.9" fill="#555" text-anchor="middle">4</text><text x="633.30" y="401.80" font-size="3.9" fill="#555" text-anchor="middle">5</text><text x="658.20" y="401.80" font-size="3.9" fill="#555" text-anchor="middle">6</text><text x="683.10" y="401.80" font-size="3.9" fill="#555" text-anchor="middle">7</text><text x="708.00" y="401.80" font-size="3.9" fill="#555" text-anchor="middle">8</text><text x="732.90" y="401.80" font-size="3.9" fill="#555" text-anchor="middle">9</text><text x="757.80" y="401.80" font-size="3.9" fill="#555" text-anchor="middle">10</text><text x="504.70" y="58.00" font-size="3.9" fill="#2c4a4c" stroke="#2c4a4c" stroke-width="0.08" text-anchor="end">0</text><text x="504.70" y="114.28" font-size="3.9" fill="#2c4a4c" stroke="#2c4a4c" stroke-width="0.08" text-anchor="end">5</text><text x="504.70" y="170.55" font-size="3.9" fill="#2c4a4c" stroke="#2c4a4c" stroke-width="0.08" text-anchor="end">10</text><text x="504.70" y="226.83" font-size="3.9" fill="#2c4a4c" stroke="#2c4a4c" stroke-width="0.08" text-anchor="end">15</text><text x="504.70" y="283.10" font-size="3.9" fill="#2c4a4c" stroke="#2c4a4c" stroke-width="0.08" text-anchor="end">20</text><text x="504.70" y="339.38" font-size="3.9" fill="#2c4a4c" stroke="#2c4a4c" stroke-width="0.08" text-anchor="end">25</text><text x="504.70" y="395.65" font-size="3.9" fill="#2c4a4c" stroke="#2c4a4c" stroke-width="0.08" text-anchor="end">30</text><text x="627" y="51.25" font-size="5.72" font-weight="bold" fill="#0c1c1e" text-anchor="middle">Velocity</text><text x="633.50" y="408.20" font-size="4" font-weight="bold" fill="#333" text-anchor="middle">Velocity (M/sec) (10^3)</text><text transform="translate(497.40 225.40) rotate(-90)" font-size="3.95" font-weight="bold" fill="#2a3a3c" text-anchor="middle">Wavelength (m)</text></svg>
<div class="a" style="left:679.9px;top:354.9px;width:84.6px;height:6.6px;background:#fff;box-sizing:border-box;border:0.45px solid #9a9a9a;box-shadow:0.5px 0.5px 0.8px rgba(0,0,0,0.18);"></div>
<div class="t" style="left:681.8px;top:355.71px;font-size:4.29px;color:#777;">( 6796.68337877945, 25.8980764700175 )</div>
<div class="a" style="left:0;top:0;width:768px;height:414px;box-sizing:border-box;border:1px solid #8c8c8c;border-top:0.8px solid #8e8e8e;border-bottom:1.6px solid #6e6e6e;pointer-events:none"></div>
</div></body></html>
